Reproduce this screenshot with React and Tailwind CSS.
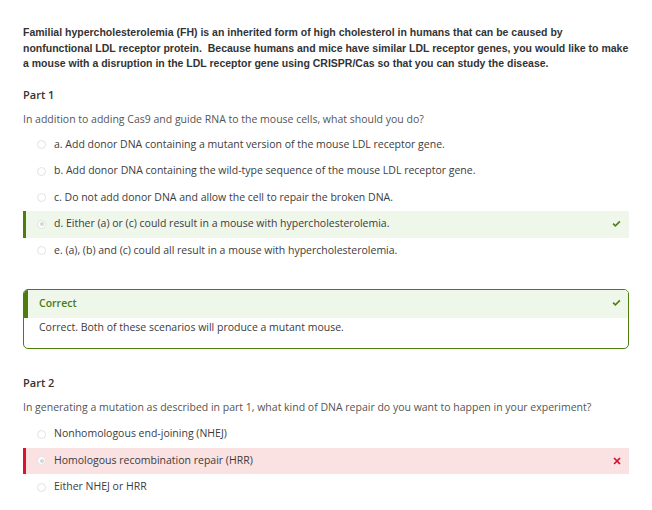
import React from "react";

const sans = { fontFamily: '"Open Sans", "Noto Sans", sans-serif' };

function Check({ className }) {
  return (
    <svg viewBox="0 0 10 8" className={className} fill="currentColor">
      <path d="M0.6 4.3 L1.9 3.0 L3.7 4.8 L8.1 0.4 L9.4 1.7 L3.7 7.4 Z" />
    </svg>
  );
}

function Cross({ className }) {
  return (
    <svg viewBox="0 0 10 10" className={className} stroke="currentColor" strokeWidth="2" strokeLinecap="square">
      <path d="M2 2 L8 8 M8 2 L2 8" />
    </svg>
  );
}

function Radio({ checked }) {
  return (
    <span className="w-[9px] h-[9px] rounded-full border border-[#e2e2e2] bg-white flex items-center justify-center shrink-0">
      {checked && <span className="w-[4px] h-[4px] rounded-full bg-[#d6d6d6]" />}
    </span>
  );
}

function Opcion({ texto, estado }) {
  let fila = "border-l-[3px] border-transparent";
  if (estado === "ok") fila = "border-l-[3px] border-[#4f7d0c] bg-[#eff6ea]";
  if (estado === "mal") fila = "border-l-[3px] border-[#e0102f] bg-[#fae1e2]";
  return (
    <div className={`h-[26.5px] flex items-center pl-[11px] pr-[8px] ${fila}`}>
      <Radio checked={!!estado} />
      <span className="ml-[8px] text-[10.5px] text-[#3c3c3c]">{texto}</span>
      {estado === "ok" && <Check className="ml-auto w-[9px] h-[8px] text-[#4d7d12]" />}
      {estado === "mal" && <Cross className="ml-auto w-[8px] h-[8px] text-[#d50f2c]" />}
    </div>
  );
}

export default function App() {
  const parte1 = [
    "a. Add donor DNA containing a mutant version of the mouse LDL receptor gene.",
    "b. Add donor DNA containing the wild-type sequence of the mouse LDL receptor gene.",
    "c. Do not add donor DNA and allow the cell to repair the broken DNA.",
    "d. Either (a) or (c) could result in a mouse with hypercholesterolemia.",
    "e. (a), (b) and (c) could all result in a mouse with hypercholesterolemia.",
  ];
  const parte2 = [
    "Nonhomologous end-joining (NHEJ)",
    "Homologous recombination repair (HRR)",
    "Either NHEJ or HRR",
  ];

  return (
    <div className="w-[652px] h-[510px] bg-white overflow-hidden pt-[25px] pl-[23px] pr-[23px]" style={sans}>
      <p
        className="text-[10.5px] leading-[15.5px] font-bold text-[#333]"
        style={{ fontFamily: '"Liberation Sans", Arial, sans-serif' }}
      >
        Familial hypercholesterolemia (FH) is an inherited form of high cholesterol in humans that can be caused by
        nonfunctional LDL receptor protein.&nbsp; Because humans and mice have similar LDL receptor genes, you would like to make
        a mouse with a disruption in the LDL receptor gene using CRISPR/Cas so that you can study the disease.
      </p>

      <p className="mt-[15px] text-[11px] leading-[16px] font-semibold text-[#333]">Part 1</p>
      <p className="mt-[8px] text-[10.5px] leading-[16px] text-[#555]">
        In addition to adding Cas9 and guide RNA to the mouse cells, what should you do?
      </p>
      <div className="mt-[5px] flex flex-col">
        {parte1.map((t, i) => (
          <Opcion key={i} texto={t} estado={i === 3 ? "ok" : null} />
        ))}
      </div>

      <div className="mt-[25px] h-[60px] border border-[#4f7d0c] rounded-[5px] overflow-hidden flex flex-col">
        <div className="h-[28px] bg-[#eff6ea] border-l-[4px] border-[#4f7d0c] flex items-center pl-[11px] pr-[7px]">
          <span className="text-[10.5px] text-[#4a7a10] font-semibold">Correct</span>
          <Check className="ml-auto mb-[3px] w-[9px] h-[8px] text-[#4d7d12]" />
        </div>
        <p className="pl-[15px] pt-[1px] text-[10.5px] leading-[16px] text-[#3c3c3c]">
          Correct. Both of these scenarios will produce a mutant mouse.
        </p>
      </div>

      <p className="mt-[26px] text-[11px] leading-[16px] font-semibold text-[#333]">Part 2</p>
      <p className="mt-[8px] text-[10.5px] leading-[16px] text-[#555]">
        In generating a mutation as described in part 1, what kind of DNA repair do you want to happen in your experiment?
      </p>
      <div className="mt-[6px] flex flex-col">
        {parte2.map((t, i) => (
          <Opcion key={i} texto={t} estado={i === 1 ? "mal" : null} />
        ))}
      </div>
    </div>
  );
}
